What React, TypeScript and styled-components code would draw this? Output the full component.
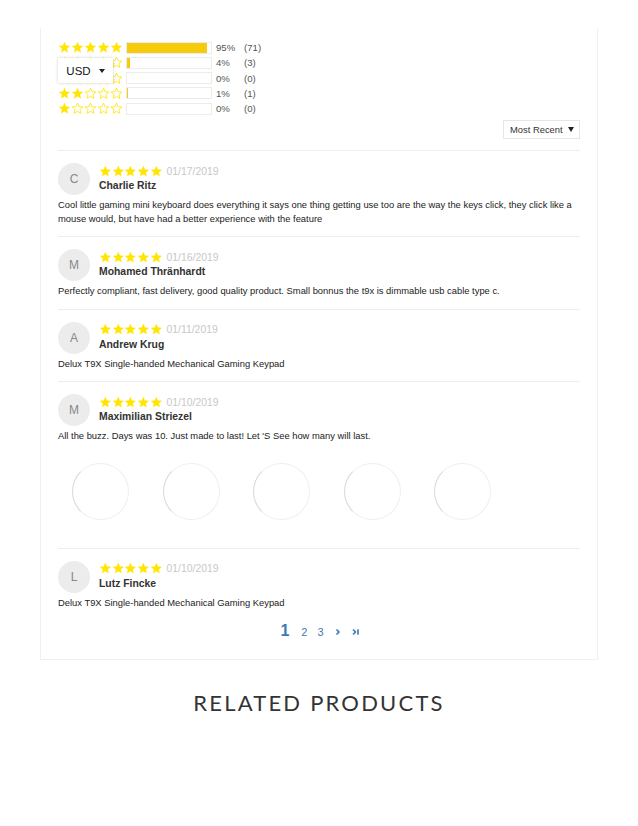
import React from 'react';
import styled, { createGlobalStyle } from 'styled-components';

const GlobalStyle = createGlobalStyle`
  body {
    margin: 0;
    background: #ffffff;
    font-family: "Liberation Sans", Arial, sans-serif;
    color: #333;
  }
`;

const Page = styled.div`
  width: 638px;
  min-height: 826px;
  padding-top: 28px;
  box-sizing: border-box;
`;

const Panel = styled.section`
  position: relative;
  margin: 0 40px;
  padding: 12px 17px 0;
  border: 1px solid #f0f0f0;
  border-top: none;
  height: 632px;
  box-sizing: border-box;
`;

const Summary = styled.div`
  display: flex;
  flex-direction: column;
`;

const SummaryRow = styled.div`
  display: flex;
  align-items: center;
  height: 15.25px;
`;

const StarsWrap = styled.div<{ $size: number }>`
  display: flex;
  width: ${({ $size }) => $size * 5}px;
`;

const Bar = styled.div`
  width: 86px;
  height: 12px;
  margin-left: 3px;
  border: 1px solid #ececec;
  box-sizing: border-box;
  background: #fff;
`;

const BarFill = styled.div`
  height: 100%;
  background: #f8ca0d;
`;

const Pct = styled.span`
  width: 28px;
  margin-left: 4px;
  font-size: 9.6px;
  color: #555;
`;

const Count = styled.span`
  font-size: 9.6px;
  color: #555;
`;

const Currency = styled.div`
  position: absolute;
  left: 17px;
  top: 30px;
  width: 55px;
  height: 25px;
  background: #fff;
  box-shadow: 0 0 3px rgba(0, 0, 0, 0.18);
  display: flex;
  align-items: center;
  justify-content: center;
  gap: 8px;
  font-size: 11.5px;
  color: #111;
`;

const Caret = styled.span`
  width: 0;
  height: 0;
  border-left: 3px solid transparent;
  border-right: 3px solid transparent;
  border-top: 4px solid #222;
`;

const SortRow = styled.div`
  display: flex;
  justify-content: flex-end;
  margin-top: 4px;
  padding-bottom: 11px;
  border-bottom: 1px solid #eeeeee;
`;

const SortBox = styled.div`
  width: 77px;
  height: 19px;
  border: 1px solid #e6e6e6;
  box-sizing: border-box;
  display: flex;
  align-items: center;
  justify-content: space-between;
  padding: 0 5px 0 6px;
  font-size: 9.4px;
  color: #333;
`;

const SortCaret = styled(Caret)`
  border-left-width: 3.5px;
  border-right-width: 3.5px;
  border-top-width: 5px;
`;

const Review = styled.article<{ $last?: boolean }>`
  padding: 12px 0 ${({ $last }) => ($last ? '0' : '11px')};
  border-bottom: ${({ $last }) => ($last ? 'none' : '1px solid #eeeeee')};
`;

const Header = styled.div`
  display: flex;
  align-items: flex-start;
  gap: 9px;
`;

const Avatar = styled.div`
  width: 32px;
  height: 32px;
  border-radius: 50%;
  background: #ececec;
  color: #888;
  font-size: 12px;
  display: flex;
  align-items: center;
  justify-content: center;
`;

const Meta = styled.div`
  display: flex;
  flex-direction: column;
  padding-top: 1px;
`;

const RatingLine = styled.div`
  display: flex;
  align-items: center;
  gap: 4px;
  height: 14px;
`;

const DateText = styled.span`
  font-size: 10.4px;
  color: #c8c8c8;
`;

const Name = styled.div`
  font-size: 10.4px;
  font-weight: bold;
  color: #333;
  margin-top: 1px;
  line-height: 14px;
`;

const Body = styled.p`
  margin: 3px 0 0;
  font-size: 9.4px;
  line-height: 13.5px;
  color: #222;
`;

const Photos = styled.div`
  display: flex;
  gap: 33.5px;
  margin: 20px 0 17px 14px;
`;

const Photo = styled.div`
  width: 57px;
  height: 57px;
  border-radius: 50%;
  border: 1.5px solid #efefef;
  border-left-color: #d8d8d8;
  box-sizing: border-box;
`;

const Pager = styled.nav`
  display: flex;
  align-items: baseline;
  justify-content: center;
  gap: 10px;
  margin-top: 13px;
  padding-left: 2px;
  color: #3d7ab3;
`;

const PageNum = styled.span<{ $active?: boolean }>`
  font-size: ${({ $active }) => ($active ? '16px' : '11px')};
  font-weight: ${({ $active }) => ($active ? 'bold' : 'normal')};
  margin-right: ${({ $active }) => ($active ? '2px' : '0')};
`;

const PagerIcon = styled.svg`
  width: 8px;
  height: 8px;
`;

const Related = styled.h2`
  margin: 29px 0 0;
  text-align: center;
  font-family: "Lato", "Open Sans", sans-serif;
  font-weight: 400;
  font-size: 22px;
  letter-spacing: 2.2px;
  color: #333;
`;

const STAR =
  'M12 17.27L18.18 21l-1.64-7.03L22 9.24l-7.19-.61L12 2 9.19 8.63 2 9.24l5.46 4.73L5.82 21z';

const Star: React.FC<{ filled: boolean; size: number }> = ({ filled, size }) => (
  <svg width={size} height={size} viewBox="0 0 24 24">
    <path
      d={STAR}
      fill={filled ? '#ffe500' : 'none'}
      stroke="#ffe500"
      strokeWidth={filled ? 0.5 : 1.5}
      strokeLinejoin="round"
    />
  </svg>
);

const Stars: React.FC<{ count: number; size?: number }> = ({ count, size = 13 }) => (
  <StarsWrap $size={size}>
    {[0, 1, 2, 3, 4].map(i => (
      <Star key={i} filled={i < count} size={size} />
    ))}
  </StarsWrap>
);

const DISTRIBUTION = [
  { stars: 5, pct: 95, count: 71 },
  { stars: 4, pct: 4, count: 3 },
  { stars: 3, pct: 0, count: 0 },
  { stars: 2, pct: 1, count: 1 },
  { stars: 1, pct: 0, count: 0 },
];

type ReviewData = {
  initial: string;
  name: string;
  date: string;
  text: string;
  photos?: number;
};

const REVIEWS: ReviewData[] = [
  {
    initial: 'C',
    name: 'Charlie Ritz',
    date: '01/17/2019',
    text:
      'Cool little gaming mini keyboard does everything it says one thing getting use too are the way the keys click, they click like a mouse would, but have had a better experience with the feature',
  },
  {
    initial: 'M',
    name: 'Mohamed Thränhardt',
    date: '01/16/2019',
    text:
      'Perfectly compliant, fast delivery, good quality product. Small bonnus the t9x is dimmable usb cable type c.',
  },
  {
    initial: 'A',
    name: 'Andrew Krug',
    date: '01/11/2019',
    text: 'Delux T9X Single-handed Mechanical Gaming Keypad',
  },
  {
    initial: 'M',
    name: 'Maximilian Striezel',
    date: '01/10/2019',
    text: "All the buzz. Days was 10. Just made to last! Let 'S See how many will last.",
    photos: 5,
  },
  {
    initial: 'L',
    name: 'Lutz Fincke',
    date: '01/10/2019',
    text: 'Delux T9X Single-handed Mechanical Gaming Keypad',
  },
];

export default function App() {
  return (
    <>
      <GlobalStyle />
      <Page>
        <Panel>
          <Summary>
            {DISTRIBUTION.map(row => (
              <SummaryRow key={row.stars}>
                <Stars count={row.stars} />
                <Bar>
                  <BarFill style={{ width: `${row.pct}%` }} />
                </Bar>
                <Pct>{row.pct}%</Pct>
                <Count>({row.count})</Count>
              </SummaryRow>
            ))}
          </Summary>
          <Currency>
            USD <Caret />
          </Currency>
          <SortRow>
            <SortBox>
              Most Recent <SortCaret />
            </SortBox>
          </SortRow>

          {REVIEWS.map((r, i) => (
            <Review key={r.name} $last={i === REVIEWS.length - 1}>
              <Header>
                <Avatar>{r.initial}</Avatar>
                <Meta>
                  <RatingLine>
                    <Stars count={5} size={12.7} />
                    <DateText>{r.date}</DateText>
                  </RatingLine>
                  <Name>{r.name}</Name>
                </Meta>
              </Header>
              <Body>{r.text}</Body>
              {r.photos ? (
                <Photos>
                  {Array.from({ length: r.photos }).map((_, k) => (
                    <Photo key={k} />
                  ))}
                </Photos>
              ) : null}
            </Review>
          ))}

          <Pager>
            <PageNum $active>1</PageNum>
            <PageNum>2</PageNum>
            <PageNum>3</PageNum>
            <PagerIcon viewBox="0 0 8 8">
              <path d="M2.5 1.5L5 4 2.5 6.5" fill="none" stroke="#3d7ab3" strokeWidth="1.6" />
            </PagerIcon>
            <PagerIcon viewBox="0 0 8 8">
              <path d="M1 1.5L3.5 4 1 6.5" fill="none" stroke="#3d7ab3" strokeWidth="1.6" />
              <path d="M6 1.2v5.6" stroke="#3d7ab3" strokeWidth="1.6" />
            </PagerIcon>
          </Pager>
        </Panel>
        <Related>RELATED PRODUCTS</Related>
      </Page>
    </>
  );
}
